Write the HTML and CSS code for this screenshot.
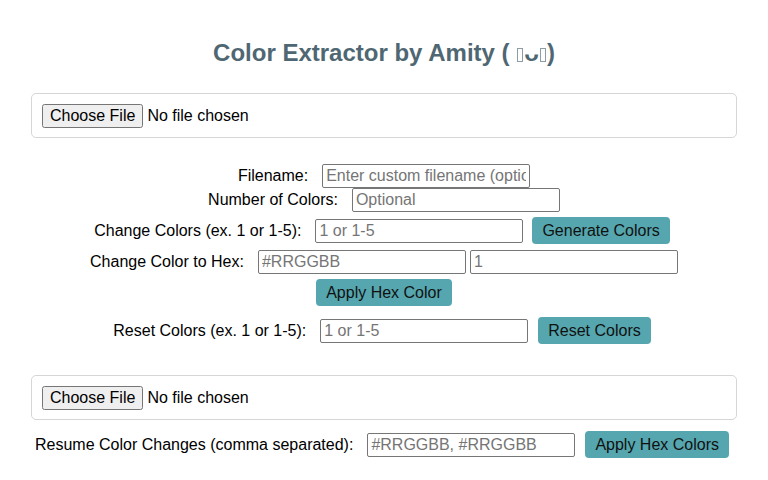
FILE: index.html
```html
<!DOCTYPE html>
<html lang="en">
<head>
    <meta charset="UTF-8">
    <meta name="viewport" content="width=device-width, initial-scale=1.0">
    <title>Color Extractor by Amity</title>
    <link rel="stylesheet" href="styles.css">
</head>
<body>
    <div class="container">
        <h1>Color Extractor by Amity ( <span class="tofu"></span>ᴗ<span class="tofu"></span>)</h1>

        <div class="upload-box">
            <input type="file" id="imageInput" accept="image/*">
        </div>

        <div class="controls">
            <div class="row">
                <label for="filename">Filename:</label>
                <input type="text" id="filename" placeholder="Enter custom filename (optional)">
            </div>
            <div class="row">
                <label for="numColors">Number of Colors:</label>
                <input type="text" id="numColors" placeholder="Optional">
            </div>
            <div class="row spaced">
                <label for="changeColors">Change Colors (ex. 1 or 1-5):</label>
                <input type="text" id="changeColors" placeholder="1 or 1-5">
                <button id="generateBtn" class="gen-btn">Generate Colors</button>
            </div>
            <div class="row spaced-6">
                <label for="hexValue">Change Color to Hex:</label>
                <input type="text" id="hexValue" placeholder="#RRGGBB">
                <input type="text" id="hexIndex" class="pair" placeholder="1">
            </div>
            <div class="row spaced">
                <button id="applyHexBtn">Apply Hex Color</button>
            </div>
            <div class="row spaced-11">
                <label for="resetColors">Reset Colors (ex. 1 or 1-5):</label>
                <input type="text" id="resetColors" placeholder="1 or 1-5">
                <button id="resetBtn">Reset Colors</button>
            </div>
        </div>

        <div class="upload-box second">
            <input type="file" id="resumeInput" accept="image/*">
        </div>

        <div class="row spaced-11">
            <label for="resumeHex">Resume Color Changes (comma separated):</label>
            <input type="text" id="resumeHex" placeholder="#RRGGBB, #RRGGBB">
            <button id="applyHexColorsBtn">Apply Hex Colors</button>
        </div>
    </div>
</body>
</html>
```

FILE: styles.css
```css
body {
    font-family: 'Liberation Sans', Arial, sans-serif;
    font-size: 16px;
    color: #000;
    background-color: #fff;
    margin: 0;
    padding: 0;
}

.container {
    padding: 0 31px;
}

h1 {
    text-align: center;
    font-size: 24px;
    line-height: 28px;
    color: #4f6772;
    margin: 39px 0 26px;
}

/* missing-glyph boxes of the kaomoji */
.tofu {
    display: inline-block;
    width: 4px;
    height: 12px;
    border: 1px solid #8c9da5;
    margin: 0 1px;
    vertical-align: -1px;
}

.upload-box {
    border: 1px solid #d6d6d6;
    border-radius: 5px;
    padding: 10px;
    height: 23px;
}

.upload-box.second {
    margin-top: 31px;
}

input[type="file"] {
    font-family: 'Liberation Sans', Arial, sans-serif;
    font-size: 16px;
}

.controls {
    margin-top: 26px;
}

.row {
    display: flex;
    justify-content: center;
    align-items: center;
}

.spaced {
    margin-top: 5px;
}

.spaced-6 {
    margin-top: 6px;
}

.spaced-11 {
    margin-top: 11px;
}

label {
    margin-right: 14px;
}

input[type="text"] {
    box-sizing: border-box;
    width: 208px;
    height: 24px;
    padding: 1px 3px;
    font-family: 'Liberation Sans', Arial, sans-serif;
    font-size: 16px;
    border: 1px solid #767676;
    border-radius: 2px;
}

input[type="text"]::placeholder {
    color: #757575;
}

input.pair {
    margin-left: 4px;
}

button {
    height: 27px;
    padding: 0 10px;
    margin: 0 4px 0 10px;
    font-family: 'Liberation Sans', Arial, sans-serif;
    font-size: 16px;
    color: #111;
    background-color: #55a6ae;
    border: none;
    border-radius: 4px;
    cursor: pointer;
}

.gen-btn {
    margin-left: 9px;
}

#applyHexBtn {
    margin: 0;
}

button:hover {
    background-color: #4a959c;
}
```
